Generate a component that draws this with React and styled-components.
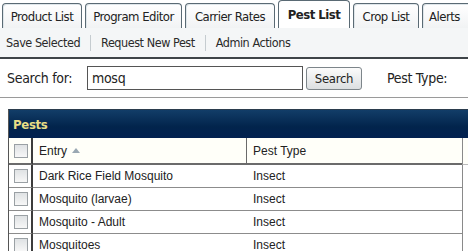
import styled, { createGlobalStyle, css } from "styled-components";

const Global = createGlobalStyle`
  html, body { margin: 0; padding: 0; background: #ffffff; }
  body { width: 468px; height: 251px; overflow: hidden; }
`;

const Page = styled.div`
  width: 468px;
  font-family: "DejaVu Sans Condensed", "DejaVu Sans", sans-serif;
  color: #222;
`;

const TabBar = styled.div`
  display: flex;
  align-items: flex-end;
  height: 28px;
  padding-left: 2px;
  gap: 3px;
  background: #ffffff;
  white-space: nowrap;
`;

const Tab = styled.div`
  box-sizing: border-box;
  flex: none;
  width: ${(p) => p.$w}px;
  height: 25px;
  display: flex;
  align-items: center;
  justify-content: ${(p) => (p.$start ? "flex-start" : "center")};
  padding-left: ${(p) => (p.$start ? 6 : 0)}px;
  font-size: 13px;
  letter-spacing: -0.5px;
  color: #222;
  background: linear-gradient(#ffffff, #f1f3f4);
  border: 1px solid #5a6a74;
  border-bottom: none;
  border-radius: 4px 4px 0 0;
  box-shadow: inset 1px 1px 0 #dfe6ea;
  ${(p) =>
    p.$active &&
    css`
      height: 28px;
      font-weight: bold;
      background: #ffffff;
      box-shadow: none;
    `}
`;

const Toolbar = styled.div`
  display: flex;
  align-items: center;
  height: 29px;
  padding-left: 6px;
  background: #f4f6f7;
  border-bottom: 2px solid #3e4448;
  font-size: 12.5px;
  letter-spacing: -0.45px;
`;

const ToolItem = styled.span`
  color: #2a2a2a;
`;

const ToolSep = styled.span`
  width: 1px;
  height: 16px;
  margin: 0 10px;
  background: #c5ccd0;
`;

const SearchRow = styled.div`
  display: flex;
  align-items: center;
  height: 38px;
  padding-left: 7px;
  border-bottom: 1px solid #9a9a9a;
  font-size: 14px;
  letter-spacing: -0.3px;
`;

const Label = styled.span`
  width: 80px;
  color: #222;
`;

const SearchInput = styled.div`
  box-sizing: border-box;
  width: 216px;
  height: 24px;
  border: 1px solid #555;
  padding-left: 4px;
  display: flex;
  align-items: center;
  background: #fff;
`;

const Button = styled.div`
  box-sizing: border-box;
  width: 56px;
  height: 23px;
  margin-left: 3px;
  border: 1px solid #7d858a;
  border-radius: 3px;
  background: linear-gradient(#fbfbfb, #dcdfe1);
  display: flex;
  align-items: center;
  justify-content: center;
  font-size: 13px;
`;

const TypeLabel = styled.span`
  margin-left: 25px;
`;

const Panel = styled.div`
  margin: 11px 0 0 8px;
  width: 460px;
  border-top: 1px solid #2b3c4d;
  border-left: 1px solid #555;
`;

const PanelHead = styled.div`
  height: 28px;
  display: flex;
  align-items: center;
  padding-left: 4px;
  background: linear-gradient(#123d68, #02244c 60%, #022150);
  color: #e8de86;
  font-weight: bold;
  font-size: 13px;
  letter-spacing: -0.3px;
`;

const Grid = styled.div`
  display: grid;
  grid-template-columns: 24px 214px 215px 7px;
  font-family: "Liberation Sans", Arial, sans-serif;
  font-size: 12px;
  color: #222;
`;

const Cell = styled.div`
  box-sizing: border-box;
  height: ${(p) => (p.$head ? 27 : 23)}px;
  display: flex;
  align-items: center;
  padding-left: ${(p) => (p.$box ? 5 : 6)}px;
  background: ${(p) => (p.$head ? "#fffff9" : "#ffffff")};
  border-bottom: ${(p) => (p.$head ? "2px solid #6b6b6b" : "1px solid #8c8c8c")};
  border-right: ${(p) => (p.$box ? "2px solid #3c3c3c" : p.$mid ? "1px solid #6a6a6a" : "none")};
  ${(p) =>
    p.$end &&
    css`
      padding: 0;
      border-left: 1px solid #8a8a8a;
      border-bottom: ${p.$head ? "1px solid #bbb" : "none"};
    `}
`;

const Check = styled.span`
  width: 12px;
  height: 12px;
  border: 1px solid #9aa0a4;
  background: linear-gradient(#dfe2e4, #f7f7f7);
`;

const SortArrow = styled.span`
  margin-left: 5px;
  width: 0;
  height: 0;
  border-left: 4px solid transparent;
  border-right: 4px solid transparent;
  border-bottom: 5px solid #9aa8b3;
`;

const tabs = [
  { label: "Product List", w: 80 },
  { label: "Program Editor", w: 97 },
  { label: "Carrier Rates", w: 90 },
  { label: "Pest List", w: 72, active: true },
  { label: "Crop List", w: 66 },
  { label: "Alerts", w: 60, start: true },
];

const rows = [
  "Dark Rice Field Mosquito",
  "Mosquito (larvae)",
  "Mosquito - Adult",
  "Mosquitoes",
];

export default function App() {
  return (
    <Page>
      <Global />
      <TabBar>
        {tabs.map((t) => (
          <Tab key={t.label} $w={t.w} $active={t.active} $start={t.start}>
            {t.label}
          </Tab>
        ))}
      </TabBar>
      <Toolbar>
        <ToolItem>Save Selected</ToolItem>
        <ToolSep />
        <ToolItem>Request New Pest</ToolItem>
        <ToolSep />
        <ToolItem>Admin Actions</ToolItem>
      </Toolbar>
      <SearchRow>
        <Label>Search for:</Label>
        <SearchInput>mosq</SearchInput>
        <Button>Search</Button>
        <TypeLabel>Pest Type:</TypeLabel>
      </SearchRow>
      <Panel>
        <PanelHead>Pests</PanelHead>
        <Grid>
          <Cell $head $box>
            <Check />
          </Cell>
          <Cell $head $mid>
            Entry
            <SortArrow />
          </Cell>
          <Cell $head>Pest Type</Cell>
          <Cell $head $end />
          {rows.map((r) => (
            <>
              <Cell key={r + "c"} $box>
                <Check />
              </Cell>
              <Cell key={r + "e"}>{r}</Cell>
              <Cell key={r + "t"}>Insect</Cell>
              <Cell key={r + "x"} $end />
            </>
          ))}
        </Grid>
      </Panel>
    </Page>
  );
}
